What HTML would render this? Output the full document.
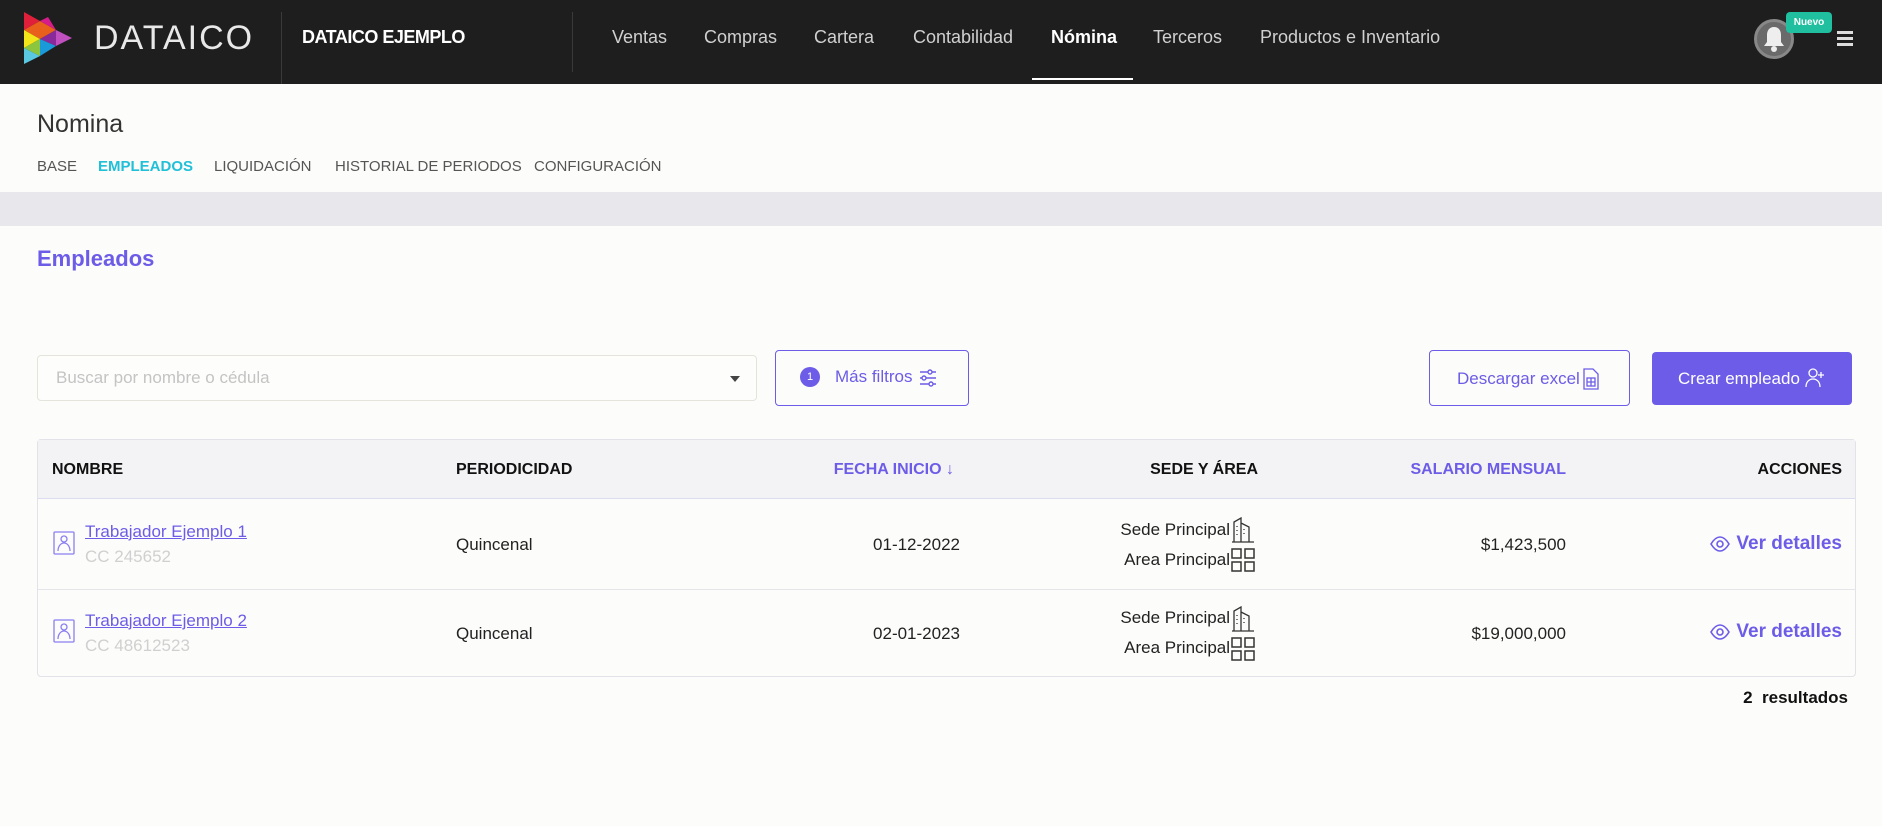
<!DOCTYPE html>
<html><head><meta charset="utf-8"><style>
*{box-sizing:border-box;margin:0;padding:0}
body{width:1882px;height:826px;background:#fcfcfa;font-family:"Liberation Sans",sans-serif;position:relative;overflow:hidden;color:#222}
.a{position:absolute;white-space:nowrap}
.nav{position:absolute;left:0;top:0;width:1882px;height:84px;background:#1e1e1e}
.ni{position:absolute;top:27px;font-size:18px;color:#d0d0d0}
.th{position:absolute;top:461px;font-size:16px;font-weight:bold;color:#111}
.td{font-size:17px;color:#222}
.pu{color:#6c5ce7}
</style></head><body>
<div class="nav">
 <svg class="a" style="left:24px;top:12px" width="50" height="52" viewBox="0 0 50 52">
  <polygon points="0,0 16,9 0,18" fill="#e0203a"/><polygon points="16,9 32,18 16,27 0,18" fill="#e8601c"/>
  <polygon points="16,9 32,18 24,5" fill="#d81b8a"/><polygon points="32,18 48,26 32,34 24,26" fill="#c050c0"/>
  <polygon points="0,18 16,27 0,36" fill="#f2e51a"/><polygon points="16,27 32,18 32,34" fill="#8a2a9a"/>
  <polygon points="16,27 32,34 16,44" fill="#1a9ad8"/><polygon points="0,36 16,27 16,44" fill="#8cc63f"/>
  <polygon points="0,36 16,44 0,52" fill="#5ac8e0"/>
 </svg>
 <div class="a" style="left:94px;top:19px;font-size:34px;color:#e8e8e8;letter-spacing:2px;font-weight:300">DATAICO</div>
 <div class="a" style="left:281px;top:12px;width:1px;height:72px;background:#3a3a3a"></div>
 <div class="a" style="left:302px;top:27px;font-size:18px;font-weight:bold;color:#fff;letter-spacing:-0.5px">DATAICO EJEMPLO</div>
 <div class="a" style="left:572px;top:12px;width:1px;height:60px;background:#3a3a3a"></div>
 <div class="ni" style="left:612px">Ventas</div>
 <div class="ni" style="left:704px">Compras</div>
 <div class="ni" style="left:814px">Cartera</div>
 <div class="ni" style="left:913px">Contabilidad</div>
 <div class="ni" style="left:1051px;color:#fff;font-weight:bold">Nómina</div>
 <div class="a" style="left:1032px;top:78px;width:101px;height:2px;background:#fff"></div>
 <div class="ni" style="left:1153px">Terceros</div>
 <div class="ni" style="left:1260px">Productos e Inventario</div>
 <div class="a" style="left:1754px;top:19px;width:40px;height:40px;border-radius:50%;background:#6a6a6a;border:3px solid #888"></div>
 <svg class="a" style="left:1762px;top:25px" width="24" height="28" viewBox="0 0 24 28"><path d="M12 2c-5 0-7 4-7 8v7l-3 4h20l-3-4v-7c0-4-2-8-7-8z" fill="#eee"/><circle cx="12" cy="24" r="3" fill="#eee"/></svg>
 <div class="a" style="left:1786px;top:12px;width:46px;height:21px;background:#1fbf9f;border-radius:4px;color:#fff;font-size:10px;font-weight:bold;text-align:center;line-height:21px">Nuevo</div>
 <div class="a" style="left:1837px;top:31px;width:16px;height:3px;background:#ddd;box-shadow:0 6px 0 #ddd,0 12px 0 #ddd"></div>
</div>
<div class="a" style="left:37px;top:110px;font-size:25px;color:#333;font-weight:300">Nomina</div>
<div class="a" style="left:37px;top:158px;font-size:15px;color:#555">BASE</div>
<div class="a" style="left:98px;top:158px;font-size:15px;color:#20c0d8;font-weight:bold">EMPLEADOS</div>
<div class="a" style="left:214px;top:158px;font-size:15px;color:#555">LIQUIDACIÓN</div>
<div class="a" style="left:335px;top:158px;font-size:15px;color:#555">HISTORIAL DE PERIODOS</div>
<div class="a" style="left:534px;top:158px;font-size:15px;color:#555">CONFIGURACIÓN</div>
<div class="a" style="left:0;top:192px;width:1882px;height:34px;background:#e8e8ec"></div>
<div class="a pu" style="left:37px;top:246px;font-size:22px;font-weight:bold">Empleados</div>
<div class="a" style="left:37px;top:355px;width:720px;height:46px;border:1px solid #e4e4dc;border-radius:4px;background:#fdfdfb"></div>
<div class="a" style="left:56px;top:368px;font-size:17px;color:#c4c4c4">Buscar por nombre o cédula</div>
<div class="a" style="left:730px;top:376px;width:0;height:0;border-left:5px solid transparent;border-right:5px solid transparent;border-top:6px solid #444"></div>
<div class="a" style="left:775px;top:350px;width:194px;height:56px;border:1.5px solid #6c5ce7;border-radius:4px"></div>
<div class="a" style="left:800px;top:367px;width:20px;height:20px;border-radius:50%;background:#6c5ce7;color:#fff;font-size:11px;text-align:center;line-height:20px">1</div>
<div class="a pu" style="left:835px;top:367px;font-size:17px">Más filtros</div>
<svg class="a" style="left:918px;top:368px" width="20" height="20" viewBox="0 0 20 20" fill="none" stroke="#6c5ce7" stroke-width="1.4"><path d="M2 4h16M2 10h16M2 16h16"/><circle cx="12" cy="4" r="2" fill="#fcfcfa"/><circle cx="6" cy="10" r="2" fill="#fcfcfa"/><circle cx="13" cy="16" r="2" fill="#fcfcfa"/></svg>
<div class="a" style="left:1429px;top:350px;width:201px;height:56px;border:1.5px solid #6c5ce7;border-radius:4px"></div>
<div class="a pu" style="left:1457px;top:369px;font-size:17px">Descargar excel</div>
<svg class="a" style="left:1583px;top:368px" width="16" height="22" viewBox="0 0 16 22" fill="none" stroke="#6c5ce7" stroke-width="1.3"><path d="M1 1h9l5 5v15H1z"/><rect x="4" y="10" width="8" height="8"/><path d="M8 10v8M4 14h8"/></svg>
<div class="a" style="left:1652px;top:352px;width:200px;height:53px;background:#6c5ce7;border-radius:4px"></div>
<div class="a" style="left:1678px;top:369px;font-size:17px;color:#fff">Crear empleado</div>
<svg class="a" style="left:1804px;top:367px" width="22" height="22" viewBox="0 0 22 22" fill="none" stroke="#fff" stroke-width="1.3"><circle cx="9" cy="6" r="4"/><path d="M2 20c0-5 3-8 7-8s7 3 7 8M17 5v6M14 8h6"/></svg>
<div class="a" style="left:37px;top:439px;width:1819px;height:238px;border:1px solid #e2e2e8;border-radius:4px"></div>
<div class="a" style="left:38px;top:440px;width:1817px;height:59px;background:#f3f3f5;border-bottom:1px solid #dcdcf0"></div>
<div class="th" style="left:52px">NOMBRE</div>
<div class="th" style="left:456px">PERIODICIDAD</div>
<div class="th pu" style="right:928px">FECHA INICIO ↓</div>
<div class="th" style="right:624px">SEDE Y ÁREA</div>
<div class="th pu" style="right:316px">SALARIO MENSUAL</div>
<div class="th" style="right:40px">ACCIONES</div>
<div class="a" style="left:38px;top:589px;width:1817px;height:1px;background:#e6e6ea"></div>
<!-- rows -->
<svg class="a" style="left:53px;top:531px" width="22" height="24" viewBox="0 0 22 24" fill="none" stroke="#8a7ff0" stroke-width="1.3"><rect x="1" y="1" width="20" height="22" rx="1"/><circle cx="11" cy="8" r="3"/><path d="M5 20c0-5 3-8 6-8s6 3 6 8"/></svg>
<div class="a pu" style="left:85px;top:522px;font-size:17px;text-decoration:underline">Trabajador Ejemplo 1</div>
<div class="a" style="left:85px;top:547px;font-size:17px;color:#d0d0d0">CC 245652</div>
<div class="a td" style="left:456px;top:535px">Quincenal</div>
<div class="a td" style="right:922px;top:535px">01-12-2022</div>
<div class="a td" style="right:652px;top:520px">Sede Principal</div>
<div class="a td" style="right:652px;top:550px">Area Principal</div>
<div class="a td" style="right:316px;top:535px">$1,423,500</div>
<svg class="a" style="left:1710px;top:536px" width="20" height="16" viewBox="0 0 20 16" fill="none" stroke="#6c5ce7" stroke-width="1.6"><path d="M1 8c3-5 6-7 9-7s6 2 9 7c-3 5-6 7-9 7s-6-2-9-7z"/><circle cx="10" cy="8" r="3"/></svg>
<div class="a pu" style="right:40px;top:533px;font-size:19px;font-weight:bold">Ver detalles</div>
<svg class="a" style="left:53px;top:619px" width="22" height="24" viewBox="0 0 22 24" fill="none" stroke="#8a7ff0" stroke-width="1.3"><rect x="1" y="1" width="20" height="22" rx="1"/><circle cx="11" cy="8" r="3"/><path d="M5 20c0-5 3-8 6-8s6 3 6 8"/></svg>
<div class="a pu" style="left:85px;top:611px;font-size:17px;text-decoration:underline">Trabajador Ejemplo 2</div>
<div class="a" style="left:85px;top:636px;font-size:17px;color:#d0d0d0">CC 48612523</div>
<div class="a td" style="left:456px;top:624px">Quincenal</div>
<div class="a td" style="right:922px;top:624px">02-01-2023</div>
<div class="a td" style="right:652px;top:608px">Sede Principal</div>
<div class="a td" style="right:652px;top:638px">Area Principal</div>
<div class="a td" style="right:316px;top:624px">$19,000,000</div>
<svg class="a" style="left:1710px;top:624px" width="20" height="16" viewBox="0 0 20 16" fill="none" stroke="#6c5ce7" stroke-width="1.6"><path d="M1 8c3-5 6-7 9-7s6 2 9 7c-3 5-6 7-9 7s-6-2-9-7z"/><circle cx="10" cy="8" r="3"/></svg>
<div class="a pu" style="right:40px;top:621px;font-size:19px;font-weight:bold">Ver detalles</div>
<svg class="a" style="left:1231px;top:517px" width="24" height="26" viewBox="0 0 24 26" fill="none" stroke="#333" stroke-width="1.3"><path d="M3 25V5l7-4v24M10 6l8 4v15M1 25h22M6 9v1M6 13v1M6 17v1M13 12v1M13 16v1"/></svg>
<svg class="a" style="left:1231px;top:548px" width="24" height="24" viewBox="0 0 24 24" fill="none" stroke="#333" stroke-width="1.5"><rect x="1" y="1" width="9" height="9"/><rect x="14" y="1" width="9" height="9"/><rect x="1" y="14" width="9" height="9"/><rect x="14" y="14" width="9" height="9"/></svg>
<svg class="a" style="left:1231px;top:606px" width="24" height="26" viewBox="0 0 24 26" fill="none" stroke="#333" stroke-width="1.3"><path d="M3 25V5l7-4v24M10 6l8 4v15M1 25h22M6 9v1M6 13v1M6 17v1M13 12v1M13 16v1"/></svg>
<svg class="a" style="left:1231px;top:637px" width="24" height="24" viewBox="0 0 24 24" fill="none" stroke="#333" stroke-width="1.5"><rect x="1" y="1" width="9" height="9"/><rect x="14" y="1" width="9" height="9"/><rect x="1" y="14" width="9" height="9"/><rect x="14" y="14" width="9" height="9"/></svg>
<div class="a" style="right:34px;top:688px;font-size:17px;font-weight:bold;color:#111">2&nbsp; resultados</div>
</body></html>
